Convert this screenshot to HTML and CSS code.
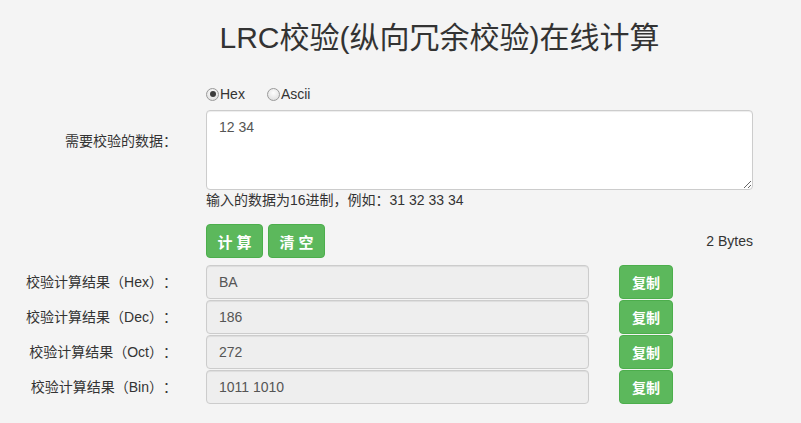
FILE: index.html
```html
<!DOCTYPE html>
<html lang="zh-CN">
<head>
<meta charset="utf-8">
<title>LRC校验(纵向冗余校验)在线计算</title>
<link rel="stylesheet" href="styles.css">
</head>
<body>
<h1 class="title">LRC校验(纵向冗余校验)在线计算</h1>
<form class="form">
  <div class="row row-data">
    <label class="lbl lbl-data">需要校验的数据：</label>
    <div class="main">
      <div class="radios">
        <label class="radio"><input type="radio" name="fmt" checked><span>Hex</span></label>
        <label class="radio"><input type="radio" name="fmt"><span>Ascii</span></label>
      </div>
      <textarea class="data">12 34</textarea>
      <p class="hint">输入的数据为16进制，例如：31 32 33 34</p>
    </div>
  </div>
  <div class="row row-actions">
    <div class="lbl"></div>
    <div class="main actions">
      <button type="button" class="btn btn-wide">计 算</button>
      <button type="button" class="btn btn-wide">清 空</button>
      <span class="bytes">2 Bytes</span>
    </div>
  </div>
  <div class="row result">
    <label class="lbl">校验计算结果（Hex）：</label>
    <input class="out" type="text" value="BA" readonly>
    <button type="button" class="btn btn-copy">复制</button>
  </div>
  <div class="row result">
    <label class="lbl">校验计算结果（Dec）：</label>
    <input class="out" type="text" value="186" readonly>
    <button type="button" class="btn btn-copy">复制</button>
  </div>
  <div class="row result">
    <label class="lbl">校验计算结果（Oct）：</label>
    <input class="out" type="text" value="272" readonly>
    <button type="button" class="btn btn-copy">复制</button>
  </div>
  <div class="row result">
    <label class="lbl">校验计算结果（Bin）：</label>
    <input class="out" type="text" value="1011 1010" readonly>
    <button type="button" class="btn btn-copy">复制</button>
  </div>
</form>
</body>
</html>
```
FILE: styles.css
```css
* { box-sizing: border-box; }
html, body {
  margin: 0;
  padding: 0;
  background: #f4f4f4;
  color: #333;
  font-family: "Liberation Sans", Arial, "Noto Sans CJK SC", sans-serif;
  font-size: 14px;
  line-height: 20px;
  text-spacing-trim: space-all;
}
.title {
  margin: 21px 0 0 78px;
  font-size: 30px;
  line-height: 33px;
  font-weight: normal;
  text-align: center;
  color: #333;
}
.form {
  margin-top: 30px;
}
.row {
  display: flex;
  align-items: flex-start;
}
.lbl {
  width: 177px;
  flex: none;
  text-align: right;
  color: #333;
}
.lbl-data {
  padding-top: 47px;
}
.main {
  margin-left: 29px;
  width: 547px;
}
.radios {
  display: flex;
  align-items: center;
  height: 20px;
  gap: 22px;
}
.radio {
  display: inline-flex;
  align-items: center;
  color: #333;
}
.radio input {
  appearance: none;
  -webkit-appearance: none;
  width: 13px;
  height: 13px;
  margin: 0 1px 0 0;
  border-radius: 50%;
  border: 1px solid #9a9a9a;
  background: radial-gradient(circle at 50% 35%, #fdfdfd 0%, #e4e4e4 70%, #d6d6d6 100%);
  position: relative;
}
.radio input:checked::after {
  content: "";
  position: absolute;
  left: 2.5px;
  top: 2.5px;
  width: 6px;
  height: 6px;
  border-radius: 50%;
  background: #3c3c3c;
}
.data {
  display: block;
  width: 547px;
  height: 80px;
  margin-top: 6px;
  padding: 6px 12px;
  border: 1px solid #ccc;
  border-radius: 4px;
  background: #fff;
  color: #555;
  font-family: inherit;
  font-size: 14px;
  line-height: 20px;
  box-shadow: inset 0 1px 1px rgba(0,0,0,.075);
}
.hint {
  margin: 0;
  color: #333;
}
.row-actions {
  margin-top: 14px;
}
.actions {
  display: flex;
  align-items: center;
  gap: 5px;
}
.bytes {
  margin-left: auto;
  color: #333;
}
.btn {
  height: 34px;
  border: 1px solid #4cae4c;
  border-radius: 4px;
  background: #5cb85c;
  color: #fff;
  font-family: inherit;
  font-size: 14px;
  padding: 0 12px;
  cursor: pointer;
}
.btn-wide {
  width: 57px;
  padding: 0;
  font-size: 15px;
  font-weight: bold;
}
.result {
  margin-top: 1px;
  align-items: center;
}
.row-actions + .result {
  margin-top: 7px;
}
.out {
  margin-left: 29px;
  width: 383px;
  height: 34px;
  padding: 6px 12px;
  border: 1px solid #ccc;
  border-radius: 4px;
  background: #eee;
  color: #555;
  font-family: inherit;
  font-size: 14px;
  box-shadow: inset 0 1px 1px rgba(0,0,0,.075);
}
.btn-copy {
  margin-left: 30px;
  width: 54px;
  padding: 0;
  font-weight: bold;
}
```
